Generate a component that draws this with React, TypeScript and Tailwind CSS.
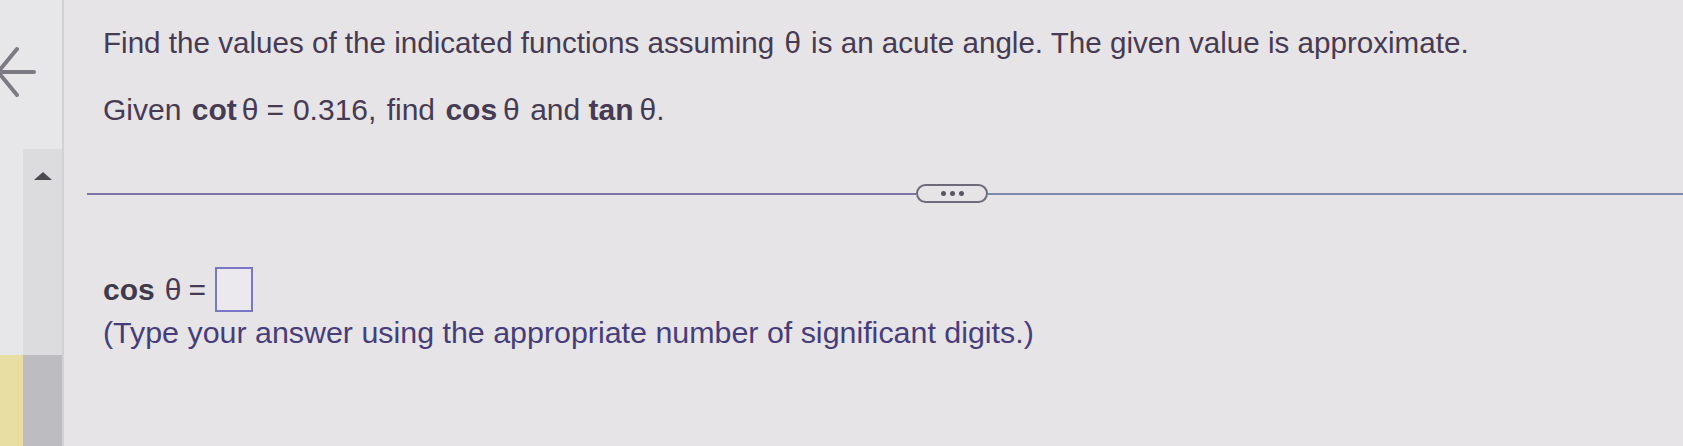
import React from "react";

function Sidebar() {
  return (
    <div className="flex h-[446px] w-[64px] shrink-0 flex-col border-r-2 border-[#d2d1d4] bg-[#e7e6e9]">
      <div className="h-[149px] pt-[46px]">
        <svg width="38" height="52" viewBox="0 0 38 52" fill="none">
          <path d="M17 3 L-2 26 L17 49" stroke="#7d7a84" strokeWidth="4" strokeLinecap="round" strokeLinejoin="round" />
          <path d="M0 26 H34" stroke="#7d7a84" strokeWidth="4" strokeLinecap="round" />
        </svg>
      </div>
      <div className="flex flex-1">
        <div className="w-[23px] flex flex-col">
          <div className="flex-1" />
          <div className="h-[91px] bg-[#e9dea2]" />
        </div>
        <div className="flex flex-1 flex-col bg-[#dcdbde]">
          <div className="flex h-[206px] justify-center pt-[22px]">
            <svg width="20" height="10" viewBox="0 0 20 10">
              <path d="M10 1 L19 9 H1 Z" fill="#4b4a50" />
            </svg>
          </div>
          <div className="flex-1 bg-[#bdbcc1]" />
        </div>
      </div>
    </div>
  );
}

export default function App() {
  return (
    <div
      className="flex h-[446px] w-[1683px] overflow-hidden bg-[#e6e4e7] text-[#463b52]"
      style={{ fontFamily: '"Liberation Sans", Arial, sans-serif' }}
    >
      <Sidebar />
      <div className="flex flex-1 flex-col">
        <div className="pl-[39px] pt-[24px] leading-[38px]">
          <p className="text-[29.6px]">
            Find the values of the indicated functions assuming <span className="mx-[2px]">θ</span> is an acute angle. The given value is approximate.
          </p>
          <p className="mt-[29px] text-[30px]">
            Given <b className="ml-[2px]">cot</b>
            <span className="ml-[5px] mr-[8px]">θ</span>=<span className="ml-[9px]">0.316, </span>
            <span className="ml-[2px]">find </span>
            <b className="ml-[2px]">cos</b>
            <span className="ml-[6px] mr-[2px]">θ</span> and <b>tan</b>
            <span className="ml-[6px]">θ</span>.
          </p>
        </div>
        <div className="mt-[55px] flex items-center pl-[23px]">
          <div className="h-[2px] w-[829px] bg-[#7d74a8]" />
          <div className="flex h-[19px] w-[72px] items-center justify-center gap-[4px] rounded-full border-2 border-[#6f6a7a]">
            <span className="h-[5px] w-[5px] rounded-full bg-[#5a5565]" />
            <span className="h-[5px] w-[5px] rounded-full bg-[#5a5565]" />
            <span className="h-[5px] w-[5px] rounded-full bg-[#5a5565]" />
          </div>
          <div className="h-[2px] flex-1 bg-[#7a8aa8]" />
        </div>
        <div className="mt-[64px] pl-[39px] leading-[38px]">
          <div className="flex items-center text-[30px]">
            <b className="text-[#3f3a4a]">cos</b>
            <span className="ml-[10px]">θ</span>
            <span className="ml-[7px]">=</span>
            <span className="ml-[9px] h-[45px] w-[38px] border-2 border-[#7c76c9] bg-[#ebe9ee]" />
          </div>
          <p className="mt-[1px] text-[30.4px] text-[#473d7a]">(Type your answer using the appropriate number of significant digits.)</p>
        </div>
      </div>
    </div>
  );
}
